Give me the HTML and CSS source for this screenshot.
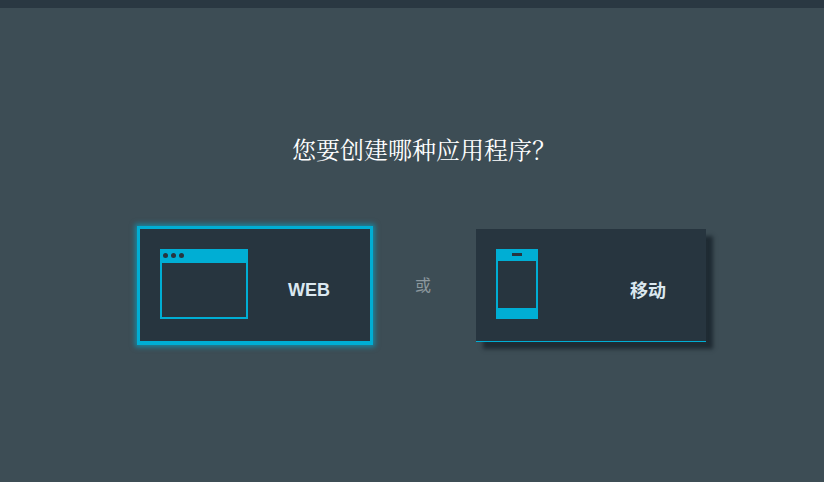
FILE: index.html
```html
<!DOCTYPE html>
<html lang="zh-CN">
<head>
<meta charset="utf-8">
<title>应用程序</title>
<link rel="stylesheet" href="styles.css">
</head>
<body>
<div class="topbar"></div>
<main class="main">
  <h1 class="title">您要创建哪种应用程序？</h1>
  <div class="choices">
    <a class="card card-web">
      <svg class="icon" width="88" height="70" viewBox="0 0 88 70">
        <rect x="1" y="1" width="86" height="68" fill="none" stroke="#00aed4" stroke-width="2"/>
        <rect width="88" height="14" fill="#00aed4"/>
        <circle cx="5.5" cy="6.5" r="2.5" fill="#27353f"/>
        <circle cx="13.5" cy="6.5" r="2.5" fill="#27353f"/>
        <circle cx="21.5" cy="6.5" r="2.5" fill="#27353f"/>
      </svg>
      <span class="label label-web">WEB</span>
    </a>
    <span class="or">或</span>
    <a class="card card-mobile">
      <svg class="icon" width="42" height="70" viewBox="0 0 42 70">
        <path fill="#00aed4" fill-rule="evenodd" d="M0 0H42V70H0ZM2 12V59H40V12ZM16 4V7H26V4Z"/>
      </svg>
      <span class="label label-mobile">移动</span>
    </a>
  </div>
</main>
</body>
</html>
```
FILE: styles.css
```css
html, body {
  margin: 0;
  padding: 0;
  height: 100%;
}
body {
  background: #3d4d55;
  overflow: hidden;
}
.topbar {
  height: 8px;
  background: #2a3842;
}
.main {
  padding-top: 125px;
}
.title {
  margin: 0;
  padding-left: 292px;
  font: 400 24px/32px "Noto Serif CJK SC", "Noto Sans CJK SC", serif;
  color: #fff;
  white-space: nowrap;
}
.choices {
  display: flex;
  align-items: center;
  margin-top: 64px;
  padding-left: 140px;
}
.card {
  display: flex;
  align-items: center;
  box-sizing: border-box;
  width: 230px;
  height: 113px;
  padding: 0 0 2px 20px;
  background: #27353f;
  border-bottom: 1px solid #00aed4;
}
.card-web {
  box-shadow: 0 0 0 3px #00aed4, 0 0 5px 5px rgba(0, 174, 212, 0.6);
}
.card-mobile {
  box-shadow: 7px 7px 4px #1f2b33;
}
.icon {
  display: block;
  flex: none;
}
.label {
  margin-left: auto;
  text-align: center;
  font: 700 18px/24px "Liberation Sans", "Noto Sans CJK SC", sans-serif;
  color: #dbe8f0;
}
.label-web {
  width: 122px;
  padding-top: 12px;
}
.label-mobile {
  width: 116px;
  padding-top: 14px;
}
.or {
  width: 106px;
  text-align: center;
  font: 400 16px/24px "Noto Sans CJK SC", sans-serif;
  color: #8d999f;
  position: relative;
  top: -2px;
}
```
